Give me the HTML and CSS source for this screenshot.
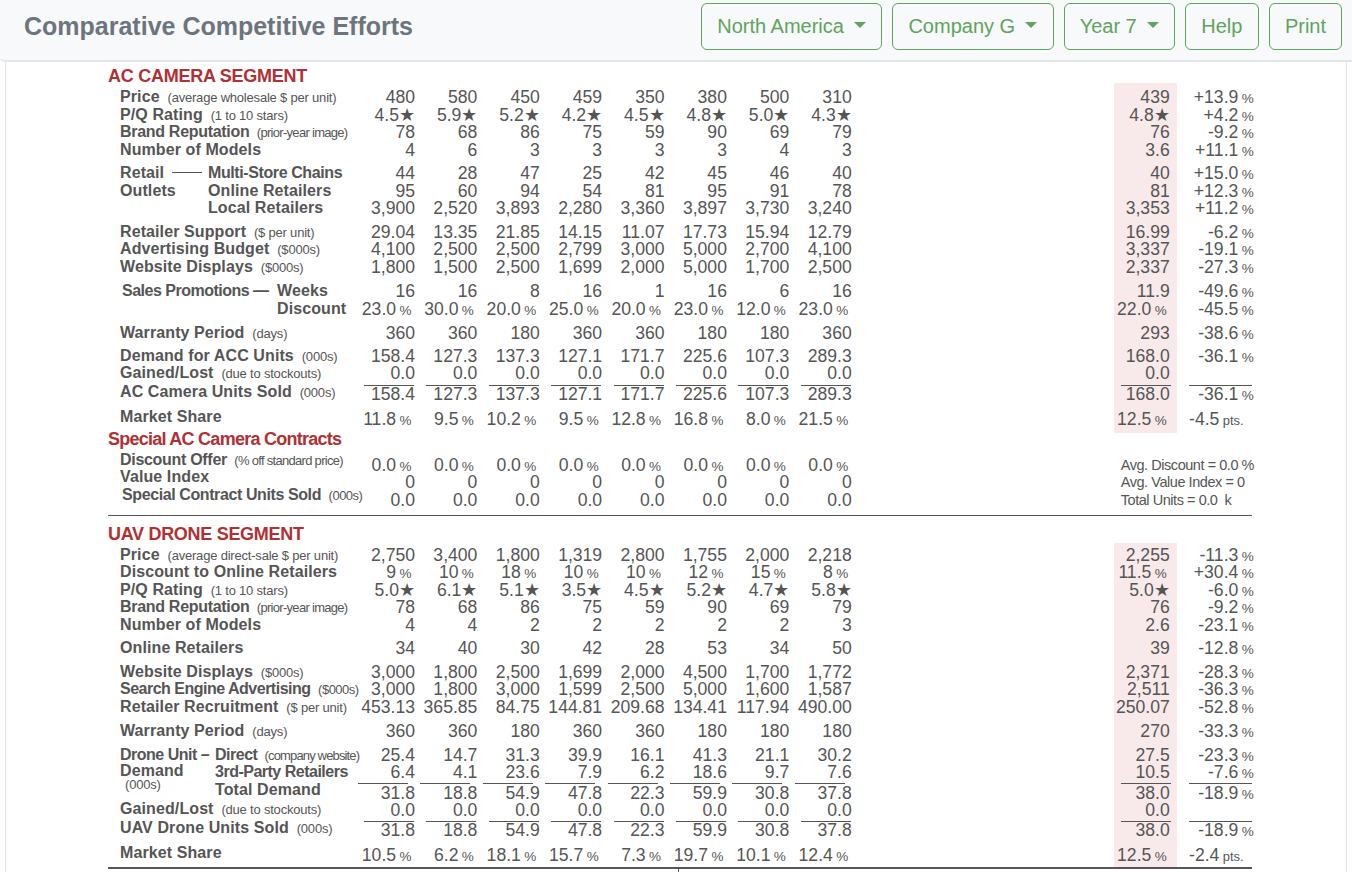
FILE: index.html
```html
<!DOCTYPE html>
<html lang="en">
<head>
<meta charset="utf-8">
<title>Comparative Competitive Efforts</title>
<link rel="stylesheet" href="styles.css">
</head>
<body>
<header class="bar">
  <h1 class="title">Comparative Competitive Efforts</h1>
  <nav class="actions">
    <button class="btn drop">North America</button>
    <button class="btn btn-w drop">Company G</button>
    <button class="btn drop">Year 7</button>
    <button class="btn btn-w">Help</button>
    <button class="btn">Print</button>
  </nav>
</header>
<main class="sheet">
  <h2 class="seg seg-first">AC CAMERA SEGMENT</h2>
  <section class="band">
    <div class="row pt6"><div class="l l1"><b>Price</b> <i>&nbsp;(average wholesale $ per unit)</i></div><span>480</span><span>580</span><span>450</span><span>459</span><span>350</span><span>380</span><span>500</span><span>310</span><span class="a">439</span><span class="c">+13.9 <small>%</small></span></div>
    <div class="row"><div class="l l1"><b>P/Q Rating</b> <i>&nbsp;(1 to 10 stars)</i></div><span>4.5★</span><span>5.9★</span><span>5.2★</span><span>4.2★</span><span>4.5★</span><span>4.8★</span><span>5.0★</span><span>4.3★</span><span class="a">4.8★</span><span class="c">+4.2 <small>%</small></span></div>
    <div class="row"><div class="l l1"><b class="tight3">Brand Reputation</b> <i class="tight7">&nbsp;(prior-year image)</i></div><span>78</span><span>68</span><span>86</span><span>75</span><span>59</span><span>90</span><span>69</span><span>79</span><span class="a">76</span><span class="c">-9.2 <small>%</small></span></div>
    <div class="row"><div class="l l1"><b>Number of Models</b></div><span>4</span><span>6</span><span>3</span><span>3</span><span>3</span><span>3</span><span>4</span><span>3</span><span class="a">3.6</span><span class="c">+11.1 <small>%</small></span></div>

    <div class="row pt6"><div class="l l1 sub"><b class="w88">Retail <em class="dash"></em></b><b class="tight4">Multi-Store Chains</b></div><span>44</span><span>28</span><span>47</span><span>25</span><span>42</span><span>45</span><span>46</span><span>40</span><span class="a">40</span><span class="c">+15.0 <small>%</small></span></div>
    <div class="row"><div class="l l1 sub"><b class="w88">Outlets</b><b>Online Retailers</b></div><span>95</span><span>60</span><span>94</span><span>54</span><span>81</span><span>95</span><span>91</span><span>78</span><span class="a">81</span><span class="c">+12.3 <small>%</small></span></div>
    <div class="row"><div class="l l1 sub"><b class="w88"></b><b>Local Retailers</b></div><span>3,900</span><span>2,520</span><span>3,893</span><span>2,280</span><span>3,360</span><span>3,897</span><span>3,730</span><span>3,240</span><span class="a">3,353</span><span class="c">+11.2 <small>%</small></span></div>

    <div class="row pt6"><div class="l l1"><b>Retailer Support</b> <i>&nbsp;($ per unit)</i></div><span>29.04</span><span>13.35</span><span>21.85</span><span>14.15</span><span>11.07</span><span>17.73</span><span>15.94</span><span>12.79</span><span class="a">16.99</span><span class="c">-6.2 <small>%</small></span></div>
    <div class="row"><div class="l l1"><b>Advertising Budget</b> <i>&nbsp;($000s)</i></div><span>4,100</span><span>2,500</span><span>2,500</span><span>2,799</span><span>3,000</span><span>5,000</span><span>2,700</span><span>4,100</span><span class="a">3,337</span><span class="c">-19.1 <small>%</small></span></div>
    <div class="row"><div class="l l1"><b>Website Displays</b> <i>&nbsp;($000s)</i></div><span>1,800</span><span>1,500</span><span>2,500</span><span>1,699</span><span>2,000</span><span>5,000</span><span>1,700</span><span>2,500</span><span class="a">2,337</span><span class="c">-27.3 <small>%</small></span></div>

    <div class="row pt7"><div class="l l1 sub"><b class="w157 in2 tight5">Sales Promotions —</b><b>Weeks</b></div><span>16</span><span>16</span><span>8</span><span>16</span><span>1</span><span>16</span><span>6</span><span>16</span><span class="a">11.9</span><span class="c">-49.6 <small>%</small></span></div>
    <div class="row"><div class="l l1 sub"><b class="w157"></b><b>Discount</b></div><span class="p">23.0 <small>%</small></span><span class="p">30.0 <small>%</small></span><span class="p">20.0 <small>%</small></span><span class="p">25.0 <small>%</small></span><span class="p">20.0 <small>%</small></span><span class="p">23.0 <small>%</small></span><span class="p">12.0 <small>%</small></span><span class="p">23.0 <small>%</small></span><span class="a p">22.0 <small>%</small></span><span class="c">-45.5 <small>%</small></span></div>

    <div class="row pt7"><div class="l l1"><b>Warranty Period</b> <i>&nbsp;(days)</i></div><span>360</span><span>360</span><span>180</span><span>360</span><span>360</span><span>180</span><span>180</span><span>360</span><span class="a">293</span><span class="c">-38.6 <small>%</small></span></div>

    <div class="row pt5"><div class="l l1"><b>Demand for ACC Units</b> <i>&nbsp;(000s)</i></div><span>158.4</span><span>127.3</span><span>137.3</span><span>127.1</span><span>171.7</span><span>225.6</span><span>107.3</span><span>289.3</span><span class="a">168.0</span><span class="c">-36.1 <small>%</small></span></div>
    <div class="row"><div class="l l1"><b>Gained/Lost</b> <i>&nbsp;(due to stockouts)</i></div><span>0.0</span><span>0.0</span><span>0.0</span><span>0.0</span><span>0.0</span><span>0.0</span><span>0.0</span><span>0.0</span><span class="a">0.0</span><span class="c"></span></div>
    <div class="row sum"><div class="l l1"><b>AC Camera Units Sold</b> <i>&nbsp;(000s)</i></div><span><u>158.4</u></span><span><u>127.3</u></span><span><u>137.3</u></span><span><u>127.1</u></span><span><u>171.7</u></span><span><u>225.6</u></span><span><u>107.3</u></span><span><u>289.3</u></span><span class="a"><u>168.0</u></span><span class="c"><u>-36.1 <small>%</small></u></span></div>

    <div class="row pt7 pb5 low"><div class="l"><b>Market Share</b></div><span class="p">11.8 <small>%</small></span><span class="p">9.5 <small>%</small></span><span class="p">10.2 <small>%</small></span><span class="p">9.5 <small>%</small></span><span class="p">12.8 <small>%</small></span><span class="p">16.8 <small>%</small></span><span class="p">8.0 <small>%</small></span><span class="p">21.5 <small>%</small></span><span class="a p">12.5 <small>%</small></span><span class="c pts">-4.5 <small>pts.</small></span></div>
  </section>

  <h3 class="seg seg-sub">Special AC Camera Contracts</h3>
  <section class="contracts">
    <div class="row l5"><div class="l"><b class="tight3">Discount Offer</b> <i class="tight7">&nbsp;(% off standard price)</i></div><span class="p">0.0 <small>%</small></span><span class="p">0.0 <small>%</small></span><span class="p">0.0 <small>%</small></span><span class="p">0.0 <small>%</small></span><span class="p">0.0 <small>%</small></span><span class="p">0.0 <small>%</small></span><span class="p">0.0 <small>%</small></span><span class="p">0.0 <small>%</small></span><span class="note">Avg. Discount = 0.0 %</span></div>
    <div class="row l5"><div class="l"><b>Value Index</b></div><span>0</span><span>0</span><span>0</span><span>0</span><span>0</span><span>0</span><span>0</span><span>0</span><span class="note">Avg. Value Index = 0</span></div>
    <div class="row l5"><div class="l in2"><b class="tight4">Special Contract Units Sold</b> <i class="tight5">&nbsp;(000s)</i></div><span>0.0</span><span>0.0</span><span>0.0</span><span>0.0</span><span>0.0</span><span>0.0</span><span>0.0</span><span>0.0</span><span class="note">Total Units = 0.0 &nbsp;k</span></div>
  </section>

  <hr class="rule">
  <h2 class="seg seg-next">UAV DRONE SEGMENT</h2>
  <section class="band">
    <div class="row pt4"><div class="l l1"><b>Price</b> <i>&nbsp;(average direct-sale $ per unit)</i></div><span>2,750</span><span>3,400</span><span>1,800</span><span>1,319</span><span>2,800</span><span>1,755</span><span>2,000</span><span>2,218</span><span class="a">2,255</span><span class="c">-11.3 <small>%</small></span></div>
    <div class="row"><div class="l l1"><b>Discount to Online Retailers</b></div><span class="p">9 <small>%</small></span><span class="p">10 <small>%</small></span><span class="p">18 <small>%</small></span><span class="p">10 <small>%</small></span><span class="p">10 <small>%</small></span><span class="p">12 <small>%</small></span><span class="p">15 <small>%</small></span><span class="p">8 <small>%</small></span><span class="a p">11.5 <small>%</small></span><span class="c">+30.4 <small>%</small></span></div>
    <div class="row"><div class="l l1"><b>P/Q Rating</b> <i>&nbsp;(1 to 10 stars)</i></div><span>5.0★</span><span>6.1★</span><span>5.1★</span><span>3.5★</span><span>4.5★</span><span>5.2★</span><span>4.7★</span><span>5.8★</span><span class="a">5.0★</span><span class="c">-6.0 <small>%</small></span></div>
    <div class="row"><div class="l l1"><b class="tight3">Brand Reputation</b> <i class="tight7">&nbsp;(prior-year image)</i></div><span>78</span><span>68</span><span>86</span><span>75</span><span>59</span><span>90</span><span>69</span><span>79</span><span class="a">76</span><span class="c">-9.2 <small>%</small></span></div>
    <div class="row"><div class="l l1"><b>Number of Models</b></div><span>4</span><span>4</span><span>2</span><span>2</span><span>2</span><span>2</span><span>2</span><span>3</span><span class="a">2.6</span><span class="c">-23.1 <small>%</small></span></div>

    <div class="row pt6"><div class="l l1"><b>Online Retailers</b></div><span>34</span><span>40</span><span>30</span><span>42</span><span>28</span><span>53</span><span>34</span><span>50</span><span class="a">39</span><span class="c">-12.8 <small>%</small></span></div>

    <div class="row pt6"><div class="l l1"><b>Website Displays</b> <i>&nbsp;($000s)</i></div><span>3,000</span><span>1,800</span><span>2,500</span><span>1,699</span><span>2,000</span><span>4,500</span><span>1,700</span><span>1,772</span><span class="a">2,371</span><span class="c">-28.3 <small>%</small></span></div>
    <div class="row"><div class="l l1"><b class="tight5">Search Engine Advertising</b> <i class="tight5">&nbsp;($000s)</i></div><span>3,000</span><span>1,800</span><span>3,000</span><span>1,599</span><span>2,500</span><span>5,000</span><span>1,600</span><span>1,587</span><span class="a">2,511</span><span class="c">-36.3 <small>%</small></span></div>
    <div class="row"><div class="l l1"><b>Retailer Recruitment</b> <i>&nbsp;($ per unit)</i></div><span>453.13</span><span>365.85</span><span>84.75</span><span>144.81</span><span>209.68</span><span>134.41</span><span>117.94</span><span>490.00</span><span class="a">250.07</span><span class="c">-52.8 <small>%</small></span></div>

    <div class="row pt65"><div class="l l1"><b>Warranty Period</b> <i>&nbsp;(days)</i></div><span>360</span><span>360</span><span>180</span><span>360</span><span>360</span><span>180</span><span>180</span><span>180</span><span class="a">270</span><span class="c">-33.3 <small>%</small></span></div>

    <div class="row pt65"><div class="l l1 sub"><b class="w95 tight5">Drone Unit –</b><span class="nowrap"><b class="tight5">Direct</b> <i class="tight8">&nbsp;(company website)</i></span></div><span>25.4</span><span>14.7</span><span>31.3</span><span>39.9</span><span>16.1</span><span>41.3</span><span>21.1</span><span>30.2</span><span class="a">27.5</span><span class="c">-23.3 <small>%</small></span></div>
    <div class="row"><div class="l l1 sub"><div class="w95 stack"><b>Demand</b><i>(000s)</i></div><b class="tight5">3rd-Party Retailers</b></div><span>6.4</span><span>4.1</span><span>23.6</span><span>7.9</span><span>6.2</span><span>18.6</span><span>9.7</span><span>7.6</span><span class="a">10.5</span><span class="c">-7.6 <small>%</small></span></div>
    <div class="row sum shift"><div class="l l1 sub"><b class="w95"></b><b>Total Demand</b></div><span><u>31.8</u></span><span><u>18.8</u></span><span><u>54.9</u></span><span><u>47.8</u></span><span><u>22.3</u></span><span><u>59.9</u></span><span><u>30.8</u></span><span><u>37.8</u></span><span class="a"><u>38.0</u></span><span class="c"><u>-18.9 <small>%</small></u></span></div>
    <div class="row up"><div class="l l1"><b>Gained/Lost</b> <i>&nbsp;(due to stockouts)</i></div><span>0.0</span><span>0.0</span><span>0.0</span><span>0.0</span><span>0.0</span><span>0.0</span><span>0.0</span><span>0.0</span><span class="a">0.0</span><span class="c"></span></div>
    <div class="row sum sum-2"><div class="l l1"><b>UAV Drone Units Sold</b> <i>&nbsp;(000s)</i></div><span><u>31.8</u></span><span><u>18.8</u></span><span><u>54.9</u></span><span><u>47.8</u></span><span><u>22.3</u></span><span><u>59.9</u></span><span><u>30.8</u></span><span><u>37.8</u></span><span class="a"><u>38.0</u></span><span class="c"><u>-18.9 <small>%</small></u></span></div>

    <div class="row pt7 pb3 low"><div class="l"><b>Market Share</b></div><span class="p">10.5 <small>%</small></span><span class="p">6.2 <small>%</small></span><span class="p">18.1 <small>%</small></span><span class="p">15.7 <small>%</small></span><span class="p">7.3 <small>%</small></span><span class="p">19.7 <small>%</small></span><span class="p">10.1 <small>%</small></span><span class="p">12.4 <small>%</small></span><span class="a p">12.5 <small>%</small></span><span class="c pts">-2.4 <small>pts.</small></span></div>
  </section>
  <hr class="rule rule-thick">
  <div class="split"></div>
</main>
</body>
</html>
```

FILE: styles.css
```css
* { box-sizing: border-box; }
html, body { height: 100%; }
body {
  margin: 0;
  overflow: hidden;
  background: #fff;
  color: #555;
  font-family: "Liberation Sans", Arial, sans-serif;
}
.bar {
  display: flex;
  justify-content: space-between;
  align-items: center;
  height: 62px;
  padding: 0 10px 7px 24px;
  background: #f8f9fa;
  border-bottom: 2px solid #e3e5e8;
  border-bottom-left-radius: 5px;
}
.title {
  margin: 0;
  font-size: 25px;
  font-weight: 700;
  color: #6c757d;
}
.actions { display: flex; gap: 10px; }
.btn {
  height: 47px;
  padding: 0 15px;
  border: 1px solid #5ea35e;
  border-radius: 6px;
  background: transparent;
  color: #5ea35e;
  font: 20px "Liberation Sans", Arial, sans-serif;
}
.btn-w { padding: 0 15.5px; }
.drop::after {
  content: "";
  display: inline-block;
  margin-left: 10px;
  vertical-align: 5.5px;
  border-top: 6px solid #5ea35e;
  border-left: 6px solid transparent;
  border-right: 6px solid transparent;
}
.sheet {
  height: 810px;
  margin: 0 5px;
  padding: 0 0 0 102px;
  border-left: 1px solid #dfe1e4;
  border-right: 1px solid #dfe1e4;
  overflow: hidden;
}
.seg {
  margin: 0;
  color: #b03034;
  font-size: 18px;
  font-weight: 700;
  line-height: 17px;
}
.seg-first { padding-top: 6px; height: 21px; letter-spacing: -.25px; }
.seg-sub { height: 12px; line-height: 12px; letter-spacing: -.75px; }
.seg-next { margin-top: 9.5px; letter-spacing: -.3px; }
.band {
  width: 1146px;
  background: linear-gradient(#f8eaea, #f8eaea) no-repeat 1006px 0 / 63px 100%;
}
.contracts { width: 1146px; padding-top: 11.5px; }
.row {
  display: grid;
  grid-template-columns: 244.6px repeat(8, 62.4px) 262px 63px 77px;
  font-size: 17.6px;
  line-height: 17.5px;
  white-space: nowrap;
}
.row > span { text-align: right; }
.pt4 { padding-top: 4px; }
.pt5 { padding-top: 5px; }
.pt6 { padding-top: 6px; }
.pt65 { padding-top: 6.5px; }
.pt7 { padding-top: 7px; }
.pb3 { padding-bottom: 3px; }
.pb5 { padding-bottom: 5px; }
.l {
  margin-top: -1px;
  font-size: 16px;
  line-height: 17.5px;
  min-width: 0;
}
.l1 { padding-left: 12px; }
.l b { font-weight: 700; letter-spacing: .1px; }
.l i { font-style: normal; font-size: 13px; line-height: 1; letter-spacing: -.2px; }
.low .l { padding-left: 12px; margin-top: -3px; }
.l5 .l { padding-left: 12px; margin-top: -6px; }
.l5 .l.in2 { padding-left: 14px; }
.up .l { margin-top: -2px; }
.sum .l { margin-top: -2.5px; }
.shift .l { margin-top: -1.5px; }
.l b.tight3 { letter-spacing: -.3px; }
.l b.tight4 { letter-spacing: -.4px; }
.l b.tight5, .l i.tight5 { letter-spacing: -.5px; }
.l i.tight7 { letter-spacing: -.7px; }
.l i.tight8 { letter-spacing: -.85px; }
.sub { display: flex; }
.w88 { flex: none; width: 88px; }
.w95 { flex: none; width: 95px; }
.w157 { flex: none; width: 157px; }
.l b.in2 { padding-left: 2px; }
.dash {
  display: inline-block;
  width: 30px;
  margin-left: 3px;
  vertical-align: 5px;
  border-top: 1px solid #555;
}
.stack { display: flex; flex-direction: column; height: 17.5px; line-height: 15px; }
.l .stack i { padding: 1px 0 0 5px; line-height: 12px; }
.nowrap { white-space: nowrap; }
small { margin-left: -1.5px; font-size: 13.5px; line-height: 1; }
.pts small { font-size: 13px; }
.row > .p { padding-right: 3.5px; }
.row > .a { grid-column: 11; padding-right: 7px; }
.row > .c { grid-column: 12; }
.row > .a.p { padding-right: 10px; }
.row > .pts { padding-right: 10px; }
.sum { padding-top: 2.5px; }
.sum.shift { padding-top: 1px; }
.sum.sum-2 { padding-top: 1.5px; }
.sum u {
  display: block;
  width: 51px;
  margin-left: auto;
  padding-top: 1px;
  text-decoration: none;
  background: linear-gradient(#555, #555) no-repeat 0 0 / 50px 1px;
}
.shift u { padding-top: 2px; }
.sum .a u { width: 50px; margin-right: -1px; padding-right: 1px; background-size: 100% 1px; }
.sum .c u { width: 65px; background-size: 63px 1px; }
.shift > span:not(.a):not(.c) u { width: 57px; }
.row > .note {
  grid-column: 11 / 13;
  padding-left: 7px;
  text-align: left;
  font-size: 14.5px;
  letter-spacing: -.45px;
}
.rule { height: 0; margin: 6px 0 0; width: 1144px; border: 0; border-top: 1px solid #555; }
.rule-thick { margin-top: 0; border-top-width: 2px; }
.split { width: 0; height: 10px; margin-left: 570px; border-left: 1px solid #555; }
```
